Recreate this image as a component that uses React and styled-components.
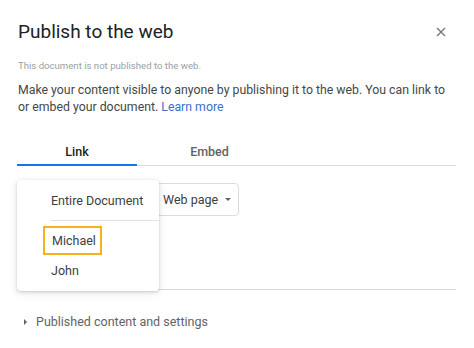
import React, { useState } from "react";
import styled, { createGlobalStyle } from "styled-components";

const GlobalStyle = createGlobalStyle`
  body {
    margin: 0;
    background: #fff;
    font-family: Roboto, "Liberation Sans", Arial, sans-serif;
    color: #3c4043;
  }
`;

const Dialog = styled.div`
  width: 474px;
  height: 348px;
  box-sizing: border-box;
  padding: 0 18px 0 17px;
`;

const Header = styled.div`
  display: flex;
  align-items: center;
  justify-content: space-between;
  padding-top: 20px;
  height: 24px;
`;

const Title = styled.h1`
  margin: 0 0 0 1px;
  font-size: 19px;
  font-weight: 400;
  line-height: 24px;
  color: #202124;
`;

const CloseButton = styled.button`
  border: 0;
  background: none;
  padding: 0;
  margin-right: 9px;
  width: 12px;
  height: 12px;
  display: flex;
  align-items: center;
  justify-content: center;
  cursor: pointer;
`;

const Note = styled.p`
  margin: 15px 0 0 1px;
  font-size: 9.6px;
  line-height: 14px;
  color: #9aa0a6;
`;

const Intro = styled.p`
  margin: 9px 0 0 1px;
  font-size: 12.3px;
  line-height: 17px;
  color: #444746;

  & a {
    color: #3a70d0;
    text-decoration: none;
  }
`;

const TabBar = styled.div`
  display: flex;
  margin-top: 22px;
  border-bottom: 1px solid #dadce0;
`;

const Tab = styled.div`
  position: relative;
  width: ${(p) => p.$width}px;
  height: 27px;
  display: flex;
  align-items: center;
  justify-content: center;
  font-size: 12.5px;
  font-weight: 500;
  color: ${(p) => (p.$active ? "#202124" : "#5f6368")};
  cursor: pointer;

  &::after {
    content: "";
    display: ${(p) => (p.$active ? "block" : "none")};
    position: absolute;
    left: 0;
    right: 0;
    bottom: -1px;
    height: 2px;
    background: #1a73e8;
  }
`;

const Panel = styled.div`
  position: relative;
  height: 123px;
  border-bottom: 1px solid #dadce0;
`;

const SelectRow = styled.div`
  display: flex;
  gap: 5px;
  padding-top: 17px;
`;

const Select = styled.div`
  height: 33px;
  box-sizing: border-box;
  border: 1px solid #dadce0;
  border-radius: 4px;
  padding: 0 7px 0 12px;
  display: flex;
  align-items: center;
  justify-content: flex-end;
  gap: 7px;
  font-size: 12.5px;
  color: #3c4043;
  width: ${(p) => (p.$width ? `${p.$width}px` : "auto")};
`;

const Caret = styled.span`
  width: 0;
  height: 0;
  border-left: 3.5px solid transparent;
  border-right: 3.5px solid transparent;
  border-top: 3.5px solid #5f6368;
`;

const Menu = styled.ul`
  position: absolute;
  left: 0;
  top: 14px;
  width: 142px;
  margin: 0;
  padding: 8px 0 5px;
  list-style: none;
  background: #fff;
  border-radius: 4px;
  box-shadow: 0 1px 3px rgba(60, 64, 67, 0.22), 0 2px 8px rgba(60, 64, 67, 0.12);
`;

const MenuItem = styled.li`
  height: ${(p) => p.$height}px;
  display: flex;
  align-items: center;
  padding-left: ${(p) => (p.$boxed ? 26 : 34)}px;
  font-size: 12.5px;
  color: #3c4043;
  cursor: pointer;
`;

const Focused = styled.span`
  height: 29px;
  box-sizing: border-box;
  display: flex;
  align-items: center;
  padding: 0 4px 0 7px;
  border: 2px solid #f5b21b;
`;

const MenuDivider = styled.li`
  height: 1px;
  margin: 8px 0 5px 33px;
  background: #e3e3e3;
`;

const Disclosure = styled.div`
  display: flex;
  align-items: center;
  gap: 9px;
  padding: 25px 0 0 7px;
  font-size: 12.5px;
  line-height: 14px;
  color: #5f6368;
`;

const Arrow = styled.span`
  width: 0;
  height: 0;
  border-top: 3px solid transparent;
  border-bottom: 3px solid transparent;
  border-left: 3.5px solid #5f6368;
`;

const App = () => {
  const [tab, setTab] = useState("link");

  return (
    <>
      <GlobalStyle />
      <Dialog>
        <Header>
          <Title>Publish to the web</Title>
          <CloseButton aria-label="Close">
            <svg width="10" height="10" viewBox="0 0 10 10">
              <path d="M1 1L9 9M9 1L1 9" stroke="#6f7378" strokeWidth="1.3" />
            </svg>
          </CloseButton>
        </Header>
        <Note>This document is not published to the web.</Note>
        <Intro>
          Make your content visible to anyone by publishing it to the web. You can link to
          <br />
          or embed your document. <a href="#">Learn more</a>
        </Intro>
        <TabBar>
          <Tab $width={120} $active={tab === "link"} onClick={() => setTab("link")}>Link</Tab>
          <Tab $width={145} $active={tab === "embed"} onClick={() => setTab("embed")}>Embed</Tab>
        </TabBar>
        <Panel>
          <SelectRow>
            {/* the scope select sits under the open menu */}
            <Select $width={128}><Caret /></Select>
            <Select>Web page <Caret /></Select>
          </SelectRow>
          <Menu>
            <MenuItem $height={24}>Entire Document</MenuItem>
            <MenuDivider />
            <MenuItem $height={29} $boxed>
              <Focused>Michael</Focused>
            </MenuItem>
            <MenuItem $height={31}>John</MenuItem>
          </Menu>
        </Panel>
        <Disclosure>
          <Arrow />
          Published content and settings
        </Disclosure>
      </Dialog>
    </>
  );
};

export default App;
